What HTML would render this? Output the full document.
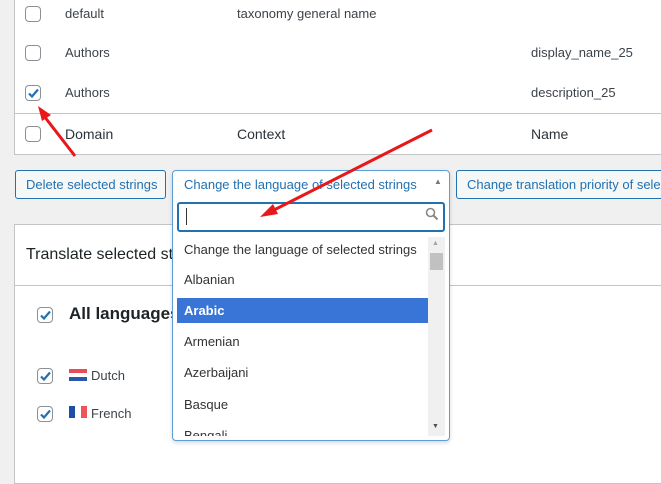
<!DOCTYPE html>
<html><head><style>
*{box-sizing:border-box;margin:0;padding:0}
body{width:661px;height:471px;overflow:hidden;background:#f0f0f1;font-family:"Liberation Sans",sans-serif;font-size:13px;color:#3c434a;position:relative}
.abs{position:absolute}
.cb{position:absolute;width:16px;height:16px;border:1px solid #8c8f94;border-radius:4px;background:#fff}
.t{position:absolute;white-space:nowrap}
.btn{position:absolute;height:29px;border:1px solid #2271b1;border-radius:3px;background:#f6f7f7;color:#2271b1;padding:0 10px;line-height:27px;white-space:nowrap;overflow:hidden}
.opt{position:absolute;left:177px;width:251px;height:25px;line-height:25px;padding-left:7px;color:#333}
</style></head><body>
<div class="abs" style="left:14px;top:-2px;width:660px;height:157px;background:#fff;border:1px solid #c3c4c7"></div>
<div class="abs" style="left:14px;top:113px;width:660px;height:1px;background:#c3c4c7"></div>
<div class="cb" style="left:25px;top:6px"></div>
<div class="cb" style="left:25px;top:45px"></div>
<div class="cb" style="left:25px;top:85px"></div>
<svg class="abs" style="left:25px;top:85px" width="16" height="16"><path d="M4 8.5l3 3 6-7" stroke="#2271b1" stroke-width="2.2" fill="none"/></svg>
<div class="cb" style="left:25px;top:126px"></div>
<div class="t" style="left:65px;top:6px">default</div>
<div class="t" style="left:237px;top:6px">taxonomy general name</div>
<div class="t" style="left:65px;top:45px">Authors</div>
<div class="t" style="left:531px;top:45px">display_name_25</div>
<div class="t" style="left:65px;top:85px">Authors</div>
<div class="t" style="left:531px;top:85px">description_25</div>
<div class="t" style="left:65px;top:126px;font-size:14px;color:#2c3338">Domain</div>
<div class="t" style="left:237px;top:126px;font-size:14px;color:#2c3338">Context</div>
<div class="t" style="left:531px;top:126px;font-size:14px;color:#2c3338">Name</div>

<div class="btn" style="left:15px;top:170px;width:151px">Delete selected strings</div>
<div class="btn" style="left:456px;top:170px;width:220px">Change translation priority of selected</div>

<div class="abs" style="left:14px;top:224px;width:660px;height:260px;background:#fff;border:1px solid #c3c4c7"></div>
<div class="abs" style="left:14px;top:285px;width:660px;height:1px;background:#c3c4c7"></div>
<div class="t" style="left:26px;top:246px;font-size:16px;color:#1d2327">Translate selected strings</div>
<div class="cb" style="left:37px;top:307px"></div>
<svg class="abs" style="left:37px;top:307px" width="16" height="16"><path d="M4 8.5l3 3 6-7" stroke="#2271b1" stroke-width="2.2" fill="none"/></svg>
<div class="t" style="left:69px;top:304px;font-size:17px;font-weight:bold;color:#1d2327">All languages</div>
<div class="cb" style="left:37px;top:368px"></div>
<svg class="abs" style="left:37px;top:368px" width="16" height="16"><path d="M4 8.5l3 3 6-7" stroke="#2271b1" stroke-width="2.2" fill="none"/></svg>
<div class="cb" style="left:37px;top:406px"></div>
<svg class="abs" style="left:37px;top:406px" width="16" height="16"><path d="M4 8.5l3 3 6-7" stroke="#2271b1" stroke-width="2.2" fill="none"/></svg>
<div class="abs" style="left:69px;top:369px;width:18px;height:12px;background:linear-gradient(#e84c55 0 33%,#fff 33% 66%,#2a57a8 66%)"></div>
<div class="t" style="left:91px;top:368px">Dutch</div>
<div class="abs" style="left:69px;top:406px;width:18px;height:12px;background:linear-gradient(90deg,#1d4fa8 0 33%,#fff 33% 66%,#f0535a 66%)"></div>
<div class="t" style="left:91px;top:406px">French</div>

<!-- dropdown -->
<div class="abs" style="left:172px;top:170px;width:278px;height:271px;background:#fff;border:1px solid #5b9dd9;border-radius:4px;box-shadow:0 2px 4px rgba(0,0,0,.15)"></div>
<div class="t" style="left:184px;top:177px;color:#2271b1">Change the language of selected strings</div>
<div class="t" style="left:434px;top:177px;font-size:8px;color:#777">▲</div>
<div class="abs" style="left:177px;top:202px;width:268px;height:30px;border:2px solid #2271b1;border-radius:3px"></div>
<div class="abs" style="left:186px;top:208px;width:1px;height:17px;background:#333"></div>
<svg class="abs" style="left:425px;top:207px" width="14" height="14"><circle cx="5.5" cy="5.5" r="4" stroke="#888" stroke-width="1.6" fill="none"/><path d="M8.5 8.5l4 4" stroke="#888" stroke-width="2"/></svg>
<div class="abs" style="left:428px;top:237px;width:17px;height:199px;background:#f0f0f0"></div>
<div class="abs" style="left:430px;top:253px;width:13px;height:17px;background:#c1c1c1"></div>
<div class="t" style="left:432px;top:240px;font-size:7px;color:#a3a3a3">▲</div>
<div class="t" style="left:432px;top:423px;font-size:7px;color:#505050">▼</div>
<div class="abs" style="left:177px;top:237px;width:251px;height:199px;overflow:hidden">
<div class="opt" style="left:0;top:0px;height:23px">Change the language of selected strings</div>
<div class="opt" style="left:0;top:30px">Albanian</div>
<div class="opt" style="left:0;top:61px;background:#3875d7;color:#fff;font-weight:bold">Arabic</div>
<div class="opt" style="left:0;top:92px">Armenian</div>
<div class="opt" style="left:0;top:123px">Azerbaijani</div>
<div class="opt" style="left:0;top:155px">Basque</div>
<div class="opt" style="left:0;top:186px">Bengali</div>
</div>

<!-- arrows -->
<svg class="abs" style="left:0;top:0" width="661" height="471">
<path d="M75 156L44 116" stroke="#e8171a" stroke-width="3"/>
<path d="M38 106L51 115L42 121Z" fill="#e8171a"/>
<path d="M432 130L272 211" stroke="#e8171a" stroke-width="3"/>
<path d="M260 217L273 204L278 214Z" fill="#e8171a"/>
</svg>
</body></html>
